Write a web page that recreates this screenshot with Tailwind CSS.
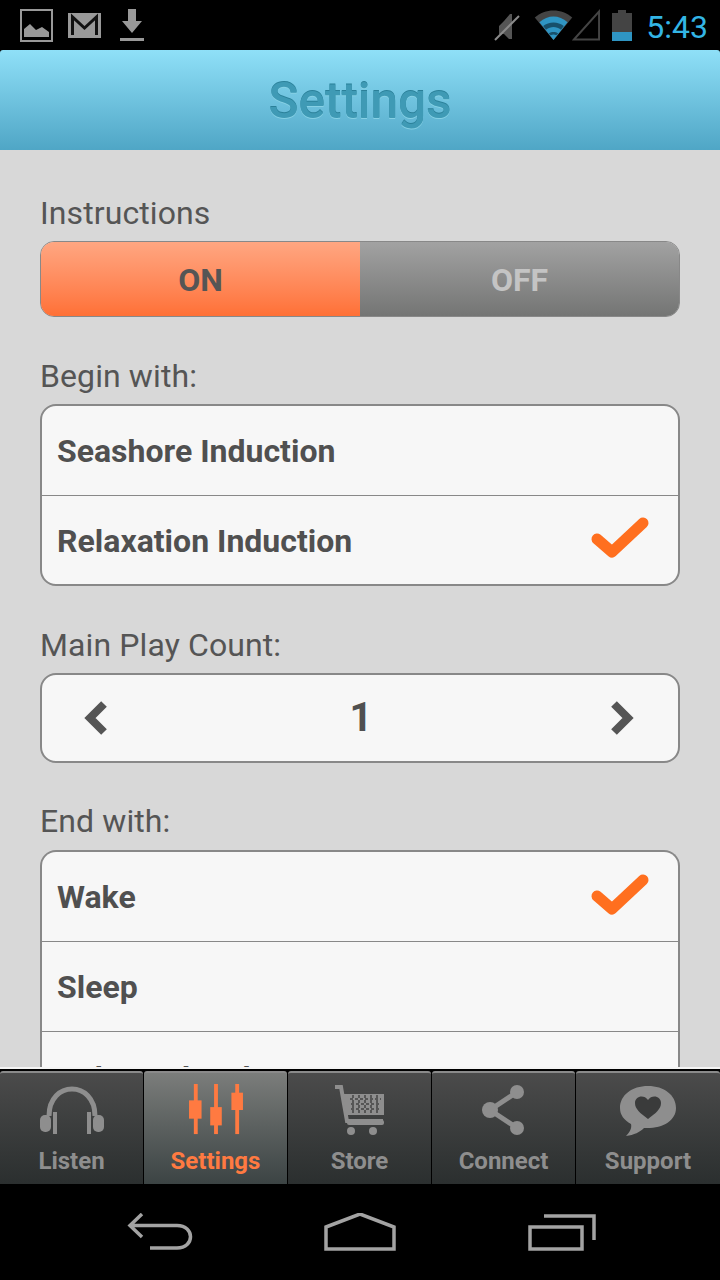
<!DOCTYPE html>
<html lang="en">
<head>
<meta charset="UTF-8">
<meta name="viewport" content="width=device-width, initial-scale=1.0">
<title>Settings</title>
<script src="https://cdn.jsdelivr.net/npm/@tailwindcss/browser@4"></script>
</head>
<body class="bg-black">
<div class="flex flex-col w-[720px] h-[1280px] overflow-hidden font-['Roboto',sans-serif]">

  <!-- status bar -->
  <div class="h-[50px] bg-black flex items-center shrink-0 pl-[20px] pr-[12px]">
    <svg class="w-[33px] h-[33px]" viewBox="0 0 33 33"><rect x="1" y="1" width="31" height="31" fill="none" stroke="#999" stroke-width="2"/><path d="M4 28V20L10 15L16 21L22 18L29 23V28Z" fill="#999"/></svg>
    <svg class="w-[33px] h-[25px] ml-[15px]" viewBox="0 0 33 25"><path d="M0 0H33V25H0Z" fill="#999"/><path d="M4.500 22V4L16.500 15L28.500 4V22" fill="none" stroke="#111" stroke-width="3"/></svg>
    <svg class="w-[24px] h-[33px] ml-[19px]" viewBox="0 0 24 33"><path d="M8 0H16V12H22L12 24L2 12H8Z" fill="#999"/><rect y="29" width="24" height="3" fill="#999"/></svg>
    <div class="flex-1"></div>
    <svg class="w-[26px] h-[28px] mt-[3px]" viewBox="0 0 26 28"><path d="M5 13L10 8L16 1H18V26H15L10 21H5Z" fill="#555"/><path d="M1 27L25 3" stroke="#8a8a8a" stroke-width="2"/></svg>
    <svg class="w-[39px] h-[30px] ml-[14px]" viewBox="0 0 40 32"><path d="M0 8C11 -2 29 -2 40 8L20 32Z" fill="#444"/><path d="M5 13C14 5 26 5 35 13L20 32Z" fill="#2f95c3"/><path d="M9 17C15 12 25 12 31 17L28 21C23 17 17 17 12 21Z" fill="#17506b"/><path d="M15 25C18 23 22 23 25 25L23 27C21 26 19 26 17 27Z" fill="#17506b"/></svg>
    <svg class="w-[28px] h-[32px] -ml-[1px]" viewBox="0 0 29 32"><path d="M2 31L28 2V31Z" fill="none" stroke="#444" stroke-width="2"/></svg>
    <svg class="w-[20px] h-[31px] ml-[12px]" viewBox="0 0 20 31"><path d="M6 0H14V3H20V31H0V3H6Z" fill="#444"/><rect y="22" width="20" height="9" fill="#2f95c3"/></svg>
    <span class="ml-[14px] mt-[3px] text-[32px] leading-none text-[#33b5e5]">5:43</span>
  </div>

  <!-- header -->
  <div class="h-[100px] shrink-0 rounded-t-[3px] flex items-center justify-center pt-[3px] bg-gradient-to-b from-[#8fe0f8] to-[#4fa6c6]">
    <h1 class="text-[49.500px] font-medium text-[#3f9ab5] [text-shadow:0_-1px_0_#2b8099,0_1px_0_#86d0e4]">Settings</h1>
  </div>

  <!-- content -->
  <div class="flex-1 min-h-0 overflow-hidden bg-[#d8d8d8] px-[40px] pt-[45px] border-b-2 border-[#f4f4f4]">
    <div class="text-[32px] tracking-[0.1px] leading-[36px] text-[#555]">Instructions</div>
    <div class="mt-[10px] flex h-[76px] rounded-[14px] border border-[#888] overflow-hidden text-[32px] font-bold">
      <div class="flex-1 flex items-center justify-center pt-[1px] text-[#555] bg-gradient-to-b from-[#ffa681] to-[#ff7035]">ON</div>
      <div class="flex-1 flex items-center justify-center pt-[1px] text-[#c4c4c4] bg-gradient-to-b from-[#a2a2a2] to-[#747574]">OFF</div>
    </div>

    <div class="mt-[41px] text-[32px] tracking-[0.1px] leading-[36px] text-[#555]">Begin with:</div>
    <div class="mt-[10px] rounded-[16px] border-2 border-[#888] bg-[#f7f7f7] overflow-hidden text-[32px] font-bold text-[#505050]">
      <div class="h-[90px] flex items-center pl-[15px] border-b border-[#888]">Seashore Induction</div>
      <div class="h-[88px] flex items-center justify-between pt-[2px] pl-[15px] pr-[29px]">
        <span>Relaxation Induction</span>
        <svg class="w-[58px] h-[44px] overflow-visible" viewBox="0 0 58 44"><path d="M6 20L21 33L52 4" fill="none" stroke="#ff6f1f" stroke-width="11" stroke-linejoin="round" stroke-linecap="round"/></svg>
      </div>
    </div>

    <div class="mt-[41px] text-[32px] tracking-[0.1px] leading-[36px] text-[#555]">Main Play Count:</div>
    <div class="mt-[10px] h-[90px] rounded-[16px] border-2 border-[#888] bg-[#f7f7f7] flex items-center justify-between pl-[40px] pr-[42px]">
      <svg class="w-[28px] h-[38px] blur-[0.5px]" viewBox="0 0 28 38"><path d="M22 5L8 19L22 33" fill="none" stroke="#555" stroke-width="8"/></svg>
      <span class="text-[40px] font-bold text-[#505050] pl-[4px]">1</span>
      <svg class="w-[28px] h-[38px] blur-[0.5px]" viewBox="0 0 28 38"><path d="M6 5L20 19L6 33" fill="none" stroke="#555" stroke-width="8"/></svg>
    </div>

    <div class="mt-[40px] text-[32px] tracking-[0.1px] leading-[36px] text-[#555]">End with:</div>
    <div class="mt-[11px] rounded-t-[16px] border-2 border-b-0 border-[#888] bg-[#f7f7f7] text-[32px] font-bold text-[#505050]">
      <div class="h-[90px] flex items-center justify-between pl-[15px] pr-[29px] border-b border-[#888]">
        <span>Wake</span>
        <svg class="w-[58px] h-[44px] overflow-visible mt-[2px]" viewBox="0 0 58 44"><path d="M6 20L21 33L52 4" fill="none" stroke="#ff6f1f" stroke-width="11" stroke-linejoin="round" stroke-linecap="round"/></svg>
      </div>
      <div class="h-[90px] flex items-center pl-[15px] border-b border-[#888]">Sleep</div>
      <div class="h-[89px] flex items-center pt-[3px] pl-[15px]">Balanced Wake</div>
    </div>
  </div>

  <!-- tab bar -->
  <div class="h-[115px] shrink-0 bg-black pt-[2px] grid grid-cols-[143px_143px_143px_143px_144px] gap-x-px text-[24px] font-bold text-[#8e8e8e]">
    <div class="flex flex-col items-center rounded-t-[3px] border-t-2 border-[#8a8a8a] bg-gradient-to-b from-[#4b4b4b] to-[#2b2f2f]">
      <svg class="w-[66px] h-[50px] mt-[13px] blur-[0.4px]" viewBox="0 0 66 50"><path d="M10 30C10 -6 56 -6 56 30" fill="none" stroke="#8e8e8e" stroke-width="5"/><rect x="1" y="29" width="11" height="17" rx="5" fill="#8e8e8e"/><rect x="54" y="29" width="11" height="17" rx="5" fill="#8e8e8e"/><rect x="14" y="26" width="4" height="22" fill="#8e8e8e"/><rect x="48" y="26" width="4" height="22" fill="#8e8e8e"/></svg>
      <span class="mt-[10px] leading-[30px]">Listen</span>
    </div>
    <div class="flex flex-col items-center rounded-t-[3px] border-t-2 border-[#8a8a8a] bg-gradient-to-b from-[#7b7d7b] to-[#3c4444] text-[#ff7a41]">
      <svg class="w-[58px] h-[52px] mt-[11px] blur-[0.4px]" viewBox="0 0 58 54"><g fill="#ff7a41"><rect x="6" y="0" width="4" height="52"/><rect x="27" y="0" width="4" height="52"/><rect x="49" y="0" width="4" height="52"/><rect x="1" y="17" width="13" height="19"/><rect x="23" y="24" width="12" height="19"/><rect x="45" y="9" width="12" height="18"/></g></svg>
      <span class="mt-[10px] leading-[30px]">Settings</span>
    </div>
    <div class="flex flex-col items-center rounded-t-[3px] border-t-2 border-[#8a8a8a] bg-gradient-to-b from-[#4b4b4b] to-[#2b2f2f]">
      <svg class="w-[52px] h-[52px] mt-[11px] -ml-[2px] blur-[0.3px]" viewBox="0 0 52 52"><path d="M2 3L8 3L14 37H50" fill="none" stroke="#8e8e8e" stroke-width="4"/><path d="M10 10H51V31H13Z" fill="#8e8e8e"/><path d="M17 15H48M18 20H48M18 25H48M20 11V30M26 11V30M32 11V30M38 11V30M44 11V30" stroke="#444" stroke-width="1.500" stroke-dasharray="3 2"/><rect x="14" y="36" width="37" height="5" rx="2" fill="#8e8e8e"/><circle cx="18" cy="47" r="4" fill="#8e8e8e"/><circle cx="40" cy="47" r="4" fill="#8e8e8e"/></svg>
      <span class="mt-[10px] leading-[30px]">Store</span>
    </div>
    <div class="flex flex-col items-center rounded-t-[3px] border-t-2 border-[#8a8a8a] bg-gradient-to-b from-[#4b4b4b] to-[#2b2f2f]">
      <svg class="w-[44px] h-[52px] mt-[11px] blur-[0.3px]" viewBox="0 0 44 52"><path d="M35 8L8 26L35 44" fill="none" stroke="#8e8e8e" stroke-width="5"/><circle cx="35" cy="8" r="7" fill="#8e8e8e"/><circle cx="8" cy="26" r="8" fill="#8e8e8e"/><circle cx="35" cy="44" r="7" fill="#8e8e8e"/></svg>
      <span class="mt-[10px] leading-[30px]">Connect</span>
    </div>
    <div class="flex flex-col items-center rounded-t-[3px] border-t-2 border-[#8a8a8a] bg-gradient-to-b from-[#4b4b4b] to-[#2b2f2f]">
      <svg class="w-[56px] h-[50px] mt-[13px] blur-[0.3px]" viewBox="0 0 56 50"><path d="M28 0C44 0 56 9 56 22C56 35 42 43 24 42C20 46 14 49 6 50C10 46 12 42 11 38C4 34 0 29 0 22C0 9 12 0 28 0Z" fill="#8e8e8e"/><path d="M28 33C20 27 15 23 15 17C15 10 24 8 28 14C32 8 41 10 41 17C41 23 36 27 28 33Z" fill="#3a3b3b"/></svg>
      <span class="mt-[10px] leading-[30px]">Support</span>
    </div>
  </div>

  <!-- android nav -->
  <div class="h-[96px] shrink-0 bg-black flex items-start pt-[29px] pl-[127px] pr-[124px] justify-between">
    <svg class="w-[66px] h-[38px]" viewBox="0 0 66 38"><path d="M15 1L3 12.500L15 24M3 12.500H50C68 12.500 68 35 50 35H23" fill="none" stroke="#a3a3a3" stroke-width="3.500"/></svg>
    <svg class="w-[72px] h-[38px] -ml-[2px]" viewBox="0 0 72 38"><path d="M2 14L36 1L70 14V36H2Z" fill="none" stroke="#a3a3a3" stroke-width="3.500"/></svg>
    <svg class="w-[68px] h-[38px]" viewBox="0 0 68 38"><rect x="2" y="14" width="52" height="22" fill="none" stroke="#a3a3a3" stroke-width="3.500"/><path d="M16 3H66V27" fill="none" stroke="#a3a3a3" stroke-width="3.500"/></svg>
  </div>
</div>
</body>
</html>
